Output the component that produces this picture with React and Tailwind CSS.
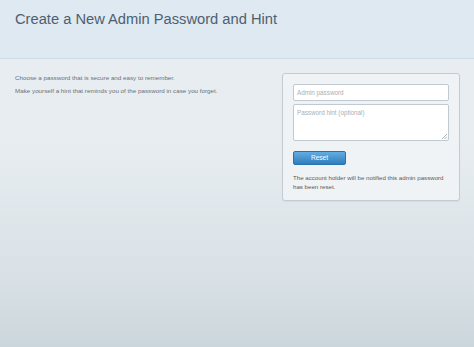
import React from "react";

export default function App() {
  return (
    <div className="w-[474px] h-[347px] overflow-hidden flex flex-col font-['Liberation_Sans',Arial,sans-serif] bg-[linear-gradient(to_bottom,#e9eef2_0%,#e6ecf0_45%,#d9e1e6_80%,#cbd6dc_100%)]">
      <div className="h-[59px] shrink-0 bg-[#dfe9f1] border-b border-[#cfdbe4] px-[15px] pt-[10px]">
        <h1 className="text-[14.7px] leading-[18px] text-[#4d6070]">Create a New Admin Password and Hint</h1>
      </div>
      <div className="flex flex-1 pl-[15px] pr-[14px] pt-[14px]">
        <div className="flex-1 text-[6.25px] leading-[7px] text-[#6b7276] flex flex-col gap-[6px] pt-[1px]">
          <p>Choose a password that is secure and easy to remember.</p>
          <p>Make yourself a hint that reminds you of the password in case you forget.</p>
        </div>
        <div className="w-[178px] h-[128px] border border-[#c3cbd2] rounded-[3px] bg-[#eff3f6] shadow-[0_1px_1px_rgba(0,0,0,0.05)] px-[10px] pt-[10px] flex flex-col">
          <div className="h-[17px] border border-[#c2cad1] rounded-[2px] bg-white px-[3px] flex items-center text-[6.3px] text-[#a9b0b6]">Admin password</div>
          <div className="mt-[3px] h-[37px] border border-[#c2cad1] rounded-[2px] bg-white px-[3px] pt-[3px] text-[6.3px] text-[#a9b0b6] relative">
            Password hint (optional)
            <svg className="absolute right-[1px] bottom-[1px]" width="5" height="5" viewBox="0 0 5 5">
              <path d="M5 0 L0 5 M5 2.5 L2.5 5" stroke="#9aa3aa" strokeWidth="0.8" />
            </svg>
          </div>
          <div className="mt-[10px] w-[53px] h-[14px] rounded-[2px] bg-[linear-gradient(to_bottom,#62ade2,#2f7dbd)] border border-[#2a72ad] flex items-center justify-center text-white text-[6.6px]">Reset</div>
          <p className="mt-[8px] -mr-[2px] text-[6.15px] leading-[9px] text-[#555b60] whitespace-nowrap">The account holder will be notified this admin password<br />has been reset.</p>
        </div>
      </div>
    </div>
  );
}
